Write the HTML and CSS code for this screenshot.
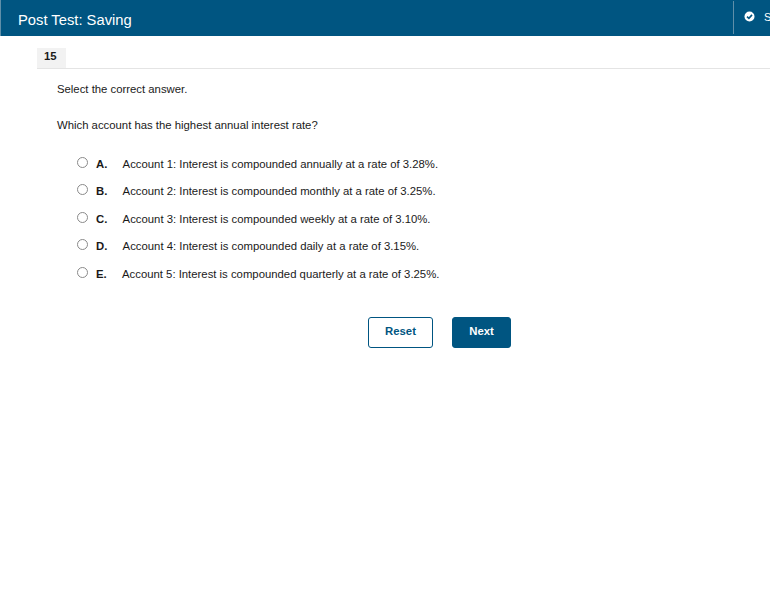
FILE: index.html
```html
<!DOCTYPE html>
<html lang="en">
<head>
    <meta charset="UTF-8">
    <title>Post Test: Saving</title>
    <link rel="stylesheet" href="styles.css">
</head>
<body>
    <header class="topbar">
        <h1 class="test-title">Post Test: Saving</h1>
        <div class="status">
            <svg class="status-icon" width="11" height="11" viewBox="0 0 11 11">
                <circle cx="5.5" cy="5.5" r="5" fill="#fff"/>
                <path d="M3 5.6 L4.9 7.4 L8 3.9" fill="none" stroke="#005581" stroke-width="1.6"/>
            </svg>
            <span>Saved</span>
        </div>
    </header>

    <main class="question">
        <div class="question-tab"><span class="question-number">15</span></div>
        <div class="question-body">
            <p class="instruction">Select the correct answer.</p>
            <p class="prompt">Which account has the highest annual interest rate?</p>

            <ul class="choices">
                <li class="choice"><span class="radio"></span><b>A.</b><span class="choice-text">Account 1: Interest is compounded annually at a rate of 3.28%.</span></li>
                <li class="choice"><span class="radio"></span><b>B.</b><span class="choice-text">Account 2: Interest is compounded monthly at a rate of 3.25%.</span></li>
                <li class="choice"><span class="radio"></span><b>C.</b><span class="choice-text">Account 3: Interest is compounded weekly at a rate of 3.10%.</span></li>
                <li class="choice"><span class="radio"></span><b>D.</b><span class="choice-text">Account 4: Interest is compounded daily at a rate of 3.15%.</span></li>
                <li class="choice"><span class="radio"></span><b>E.</b><span class="choice-text">Account 5: Interest is compounded quarterly at a rate of 3.25%.</span></li>
            </ul>
        </div>
        <div class="actions">
            <button class="btn btn-reset">Reset</button>
            <button class="btn btn-next">Next</button>
        </div>
    </main>
</body>
</html>
```

FILE: styles.css
```css
* {
    box-sizing: border-box;
}
html, body {
    overflow: hidden;
}
body {
    font-family: "Liberation Sans", Arial, sans-serif;
    font-size: 11.33px;
    margin: 0;
    padding: 0;
    background: #fff;
    color: #1a1a1a;
}
.topbar {
    height: 36px;
    background: #005581;
    color: #fff;
    display: flex;
    align-items: center;
    justify-content: space-between;
    border-left: 1px solid #5f8fa9;
    overflow: hidden;
}
.test-title {
    font-size: 14.75px;
    font-weight: normal;
    margin: 3px 0 0 17px;
}
.status {
    width: 37px;
    height: 33px;
    margin-top: -1px;
    padding: 0 0 2px 10px;
    border-left: 1px solid #5f8fa9;
    display: flex;
    align-items: center;
    gap: 9px;
    flex-shrink: 0;
    font-size: 11px;
    white-space: nowrap;
    overflow: hidden;
}
.status-icon {
    flex-shrink: 0;
}
.question {
    margin: 12px 0 0 37px;
}
.question-tab {
    height: 21px;
    border-bottom: 1px solid #e4e4e4;
}
.question-number {
    display: block;
    width: 29px;
    height: 20px;
    padding: 2px 0 0 7px;
    background: #f2f2f2;
    font-weight: bold;
}
.question-body {
    padding: 13px 0 0 20px;
}
.instruction {
    margin: 0 0 22px;
    line-height: 14px;
}
.prompt {
    margin: 0 0 18px;
    line-height: 14px;
}
.choices {
    list-style: none;
    margin: 0;
    padding: 0 0 0 20px;
}
.choice {
    height: 27.5px;
    display: flex;
    align-items: center;
}
.radio {
    width: 11px;
    height: 11px;
    margin-top: -3px;
    border: 1px solid #8a8a8a;
    border-radius: 50%;
    background: #fff;
    flex-shrink: 0;
}
.choice b {
    width: 26.6px;
    margin-left: 8px;
}
.choice:last-child b {
    width: 26px;
}
.actions {
    display: flex;
    gap: 19px;
    margin: 29px 0 0 331px;
}
.btn {
    height: 31px;
    font-family: inherit;
    font-size: 11.33px;
    font-weight: bold;
    border-radius: 3px;
    border: 1px solid #005581;
    padding: 0 0 3px;
}
.btn-reset {
    width: 65px;
    background: #fff;
    color: #005581;
}
.btn-next {
    width: 59px;
    background: #005581;
    color: #fff;
}
```
